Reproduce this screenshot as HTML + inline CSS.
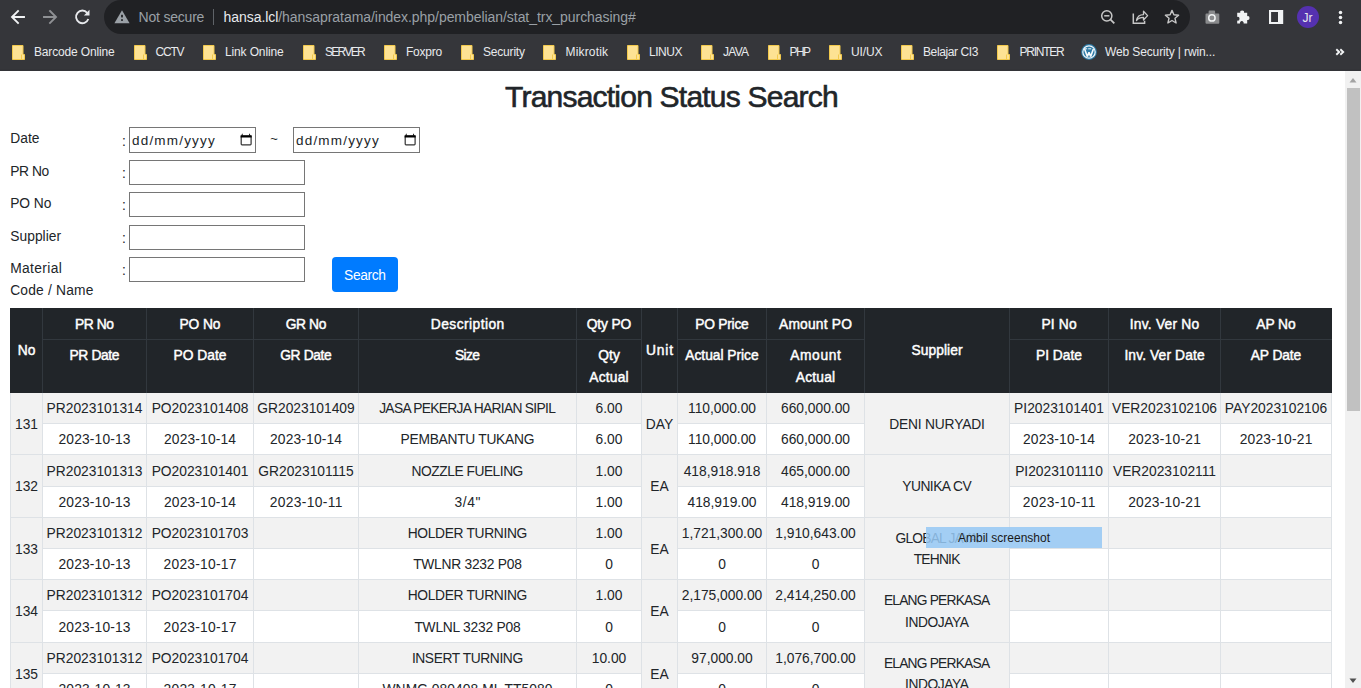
<!DOCTYPE html>
<html><head><meta charset="utf-8"><title>Transaction Status Search</title>
<style>
html,body{margin:0;padding:0;width:1361px;height:688px;overflow:hidden;background:#fff;}
body{position:relative;font-family:"Liberation Sans", sans-serif;}
.r{position:absolute;box-sizing:content-box;}
.t{position:absolute;white-space:nowrap;font-family:"Liberation Sans", sans-serif;}
</style></head><body>
<div class="r" style="left:0px;top:0px;width:1361px;height:71px;background:#35363a;"></div>
<div class="r" style="left:0px;top:69px;width:1361px;height:2px;background:#333438;"></div>
<div class="r" style="left:104px;top:0px;width:1086px;height:34px;background:#202124;border-radius:0 17px 17px 17px;border-top-left-radius:17px;"></div>
<svg class="r" style="left:0;top:0" width="100" height="34" viewBox="0 0 100 34">
<g fill="none" stroke-width="1.9" stroke-linecap="square">
<path d="M24 17 H12.5 M18 11 L12 17 L18 23" stroke="#f1f3f4"/>
<path d="M44 17 H55.5 M50 11 L56 17 L50 23" stroke="#8f9194"/>
</g>
<path d="M87.2 12.8 A6.3 6.3 0 1 0 88.3 19" fill="none" stroke="#e8eaed" stroke-width="1.9"/>
<path d="M89.5 9.8 V15.4 H83.9 Z" fill="#e8eaed"/>
</svg>
<svg class="r" style="left:113px;top:9px" width="18" height="16" viewBox="0 0 18 16">
<path d="M9 1.2 L16.6 14.3 H1.4 Z" fill="#9aa0a6"/>
<rect x="8.1" y="5.8" width="1.8" height="2.6" fill="#202124"/>
<rect x="8.1" y="10.2" width="1.8" height="1.7" fill="#202124"/>
</svg>
<div class="t" style="top:8px;height:18px;line-height:18px;font-size:14px;color:#9aa0a6;letter-spacing:-0.2px;left:138.50px;">Not secure</div>
<div class="r" style="left:213px;top:9px;width:1px;height:16px;background:#5f6368;"></div>
<div class="t" style="top:8px;height:18px;line-height:18px;font-size:14px;color:#9aa0a6;letter-spacing:-0.053px;left:223.50px;"><span style="color:#e8eaed">hansa.lcl</span><span style="color:#9aa0a6">/hansapratama/index.php/pembelian/stat_trx_purchasing#</span></div>
<svg class="r" style="left:0;top:0" width="1361" height="34" viewBox="0 0 1361 34">
<g fill="none" stroke="#c7c7c7" stroke-width="1.5">
<circle cx="1106.8" cy="15.8" r="5.1"/>
<path d="M1110.6 19.6 L1114.3 23.3" stroke-width="1.8"/>
<path d="M1104.2 15.8 H1109.4"/>
<path d="M1133.3 13.5 V23.3 H1144.6 V20.8"/>
<path d="M1136.5 20.5 C1137.3 16.5 1140 14.6 1143.5 14.6 V11.2 L1147.6 15.6 L1143.5 20 V17.4 C1140.5 17.4 1138.3 18.3 1136.5 20.5 Z" stroke-linejoin="round" stroke-width="1.3"/>
<path d="M1172 10.4 L1173.9 14.8 L1178.6 15.2 L1175 18.3 L1176.1 23 L1172 20.5 L1167.9 23 L1169 18.3 L1165.4 15.2 L1170.1 14.8 Z" stroke-linejoin="round" stroke-width="1.4"/>
</g>
<path d="M1205.5 14.6 Q1205.5 13.6 1206.5 13.6 H1208.6 V11.5 Q1208.6 10.6 1209.6 10.6 H1214.2 Q1215.1 10.6 1215.1 11.5 V13.6 H1218.3 Q1219.3 13.6 1219.3 14.6 V22.8 Q1219.3 23.8 1218.3 23.8 H1206.5 Q1205.5 23.8 1205.5 22.8 Z" fill="#8a8b8d"/>
<circle cx="1211.9" cy="17.9" r="3.2" fill="none" stroke="#f1f3f4" stroke-width="1.5"/>
<path d="M1237.2 12.8 H1240.3 A1.9 1.9 0 1 1 1244 12.8 H1247.2 V16.2 A1.9 1.9 0 1 1 1247.2 19.9 V23.6 H1243.6 A1.9 1.9 0 1 0 1240 23.6 H1237.2 V20.6 A1.9 1.9 0 1 0 1237.2 16.9 Z" fill="#f1f3f4"/>
<path d="M1269 9.9 H1283.2 V24 H1269 Z M1271.1 12 V21.9 H1278 V12 Z" fill="#f1f3f4" fill-rule="evenodd"/>
</svg>
<div class="r" style="left:1297px;top:6px;width:22px;height:22px;border-radius:50%;background:#5531b0"></div>
<div class="t" style="top:10px;height:16px;line-height:16px;font-size:12px;color:#e8eaed;left:1292.50px;width:30px;text-align:center;">Jr</div>
<svg class="r" style="left:1330px;top:0" width="20" height="34"><circle cx="10.5" cy="12.5" r="1.75" fill="#f1f3f4"/><circle cx="10.5" cy="17.6" r="1.75" fill="#f1f3f4"/><circle cx="10.5" cy="22.6" r="1.75" fill="#f1f3f4"/></svg>
<svg class="r" style="left:12px;top:45px" width="13" height="15" viewBox="0 0 13 15"><path d="M0.5 0.5 H11 V9.5 H12.5 V14.5 H0.5 Z" fill="#fde293" stroke="#f2c94c" stroke-width="1"/><path d="M9.5 9.5 V14.5" stroke="#f2c94c" stroke-width="1"/></svg>
<div class="t" style="top:44px;height:16px;line-height:16px;font-size:12px;color:#e8eaed;letter-spacing:-0.157px;left:34.00px;">Barcode Online</div>
<svg class="r" style="left:134px;top:45px" width="13" height="15" viewBox="0 0 13 15"><path d="M0.5 0.5 H11 V9.5 H12.5 V14.5 H0.5 Z" fill="#fde293" stroke="#f2c94c" stroke-width="1"/><path d="M9.5 9.5 V14.5" stroke="#f2c94c" stroke-width="1"/></svg>
<div class="t" style="top:44px;height:16px;line-height:16px;font-size:12px;color:#e8eaed;letter-spacing:-1.221px;left:155.50px;">CCTV</div>
<svg class="r" style="left:203px;top:45px" width="13" height="15" viewBox="0 0 13 15"><path d="M0.5 0.5 H11 V9.5 H12.5 V14.5 H0.5 Z" fill="#fde293" stroke="#f2c94c" stroke-width="1"/><path d="M9.5 9.5 V14.5" stroke="#f2c94c" stroke-width="1"/></svg>
<div class="t" style="top:44px;height:16px;line-height:16px;font-size:12px;color:#e8eaed;letter-spacing:-0.136px;left:225.00px;">Link Online</div>
<svg class="r" style="left:303px;top:45px" width="13" height="15" viewBox="0 0 13 15"><path d="M0.5 0.5 H11 V9.5 H12.5 V14.5 H0.5 Z" fill="#fde293" stroke="#f2c94c" stroke-width="1"/><path d="M9.5 9.5 V14.5" stroke="#f2c94c" stroke-width="1"/></svg>
<div class="t" style="top:44px;height:16px;line-height:16px;font-size:12px;color:#e8eaed;letter-spacing:-1.693px;left:325.00px;">SERVER</div>
<svg class="r" style="left:384px;top:45px" width="13" height="15" viewBox="0 0 13 15"><path d="M0.5 0.5 H11 V9.5 H12.5 V14.5 H0.5 Z" fill="#fde293" stroke="#f2c94c" stroke-width="1"/><path d="M9.5 9.5 V14.5" stroke="#f2c94c" stroke-width="1"/></svg>
<div class="t" style="top:44px;height:16px;line-height:16px;font-size:12px;color:#e8eaed;letter-spacing:-0.235px;left:406.00px;">Foxpro</div>
<svg class="r" style="left:461px;top:45px" width="13" height="15" viewBox="0 0 13 15"><path d="M0.5 0.5 H11 V9.5 H12.5 V14.5 H0.5 Z" fill="#fde293" stroke="#f2c94c" stroke-width="1"/><path d="M9.5 9.5 V14.5" stroke="#f2c94c" stroke-width="1"/></svg>
<div class="t" style="top:44px;height:16px;line-height:16px;font-size:12px;color:#e8eaed;letter-spacing:-0.193px;left:483.00px;">Security</div>
<svg class="r" style="left:543px;top:45px" width="13" height="15" viewBox="0 0 13 15"><path d="M0.5 0.5 H11 V9.5 H12.5 V14.5 H0.5 Z" fill="#fde293" stroke="#f2c94c" stroke-width="1"/><path d="M9.5 9.5 V14.5" stroke="#f2c94c" stroke-width="1"/></svg>
<div class="t" style="top:44px;height:16px;line-height:16px;font-size:12px;color:#e8eaed;letter-spacing:0.167px;left:565.50px;">Mikrotik</div>
<svg class="r" style="left:627px;top:45px" width="13" height="15" viewBox="0 0 13 15"><path d="M0.5 0.5 H11 V9.5 H12.5 V14.5 H0.5 Z" fill="#fde293" stroke="#f2c94c" stroke-width="1"/><path d="M9.5 9.5 V14.5" stroke="#f2c94c" stroke-width="1"/></svg>
<div class="t" style="top:44px;height:16px;line-height:16px;font-size:12px;color:#e8eaed;letter-spacing:-0.46px;left:649.00px;">LINUX</div>
<svg class="r" style="left:701px;top:45px" width="13" height="15" viewBox="0 0 13 15"><path d="M0.5 0.5 H11 V9.5 H12.5 V14.5 H0.5 Z" fill="#fde293" stroke="#f2c94c" stroke-width="1"/><path d="M9.5 9.5 V14.5" stroke="#f2c94c" stroke-width="1"/></svg>
<div class="t" style="top:44px;height:16px;line-height:16px;font-size:12px;color:#e8eaed;letter-spacing:-0.742px;left:723.00px;">JAVA</div>
<svg class="r" style="left:768px;top:45px" width="13" height="15" viewBox="0 0 13 15"><path d="M0.5 0.5 H11 V9.5 H12.5 V14.5 H0.5 Z" fill="#fde293" stroke="#f2c94c" stroke-width="1"/><path d="M9.5 9.5 V14.5" stroke="#f2c94c" stroke-width="1"/></svg>
<div class="t" style="top:44px;height:16px;line-height:16px;font-size:12px;color:#e8eaed;letter-spacing:-1.585px;left:789.50px;">PHP</div>
<svg class="r" style="left:829px;top:45px" width="13" height="15" viewBox="0 0 13 15"><path d="M0.5 0.5 H11 V9.5 H12.5 V14.5 H0.5 Z" fill="#fde293" stroke="#f2c94c" stroke-width="1"/><path d="M9.5 9.5 V14.5" stroke="#f2c94c" stroke-width="1"/></svg>
<div class="t" style="top:44px;height:16px;line-height:16px;font-size:12px;color:#e8eaed;letter-spacing:-0.125px;left:851.00px;">UI/UX</div>
<svg class="r" style="left:901px;top:45px" width="13" height="15" viewBox="0 0 13 15"><path d="M0.5 0.5 H11 V9.5 H12.5 V14.5 H0.5 Z" fill="#fde293" stroke="#f2c94c" stroke-width="1"/><path d="M9.5 9.5 V14.5" stroke="#f2c94c" stroke-width="1"/></svg>
<div class="t" style="top:44px;height:16px;line-height:16px;font-size:12px;color:#e8eaed;letter-spacing:-0.399px;left:923.00px;">Belajar CI3</div>
<svg class="r" style="left:997px;top:45px" width="13" height="15" viewBox="0 0 13 15"><path d="M0.5 0.5 H11 V9.5 H12.5 V14.5 H0.5 Z" fill="#fde293" stroke="#f2c94c" stroke-width="1"/><path d="M9.5 9.5 V14.5" stroke="#f2c94c" stroke-width="1"/></svg>
<div class="t" style="top:44px;height:16px;line-height:16px;font-size:12px;color:#e8eaed;letter-spacing:-1.251px;left:1019.50px;">PRINTER</div>
<svg class="r" style="left:1081px;top:44px" width="16" height="16" viewBox="0 0 16 16"><circle cx="8" cy="8" r="7.9" fill="#2d7aa6"/><circle cx="8" cy="8" r="6.2" fill="none" stroke="#f4f8fb" stroke-width="1.2"/><path d="M3.6 5 L6.4 12.6 L8 8.2 L9.6 12.6 L12.4 5" fill="none" stroke="#f4f8fb" stroke-width="1.6" stroke-linejoin="bevel"/><path d="M3 4.8 H6.2 M7.2 4.8 H10.2" stroke="#f4f8fb" stroke-width="1"/></svg>
<div class="t" style="top:44px;height:16px;line-height:16px;font-size:12px;color:#e8eaed;letter-spacing:-0.124px;left:1105.00px;">Web Security | rwin...</div>
<svg class="r" style="left:1330px;top:44px" width="20" height="16"><path d="M6.3 5.2 L9.2 8 L6.3 10.8 M10.3 5.2 L13.2 8 L10.3 10.8" fill="none" stroke="#f1f3f4" stroke-width="1.9"/></svg>
<div class="r" style="left:0px;top:71px;width:1345px;height:617px;background:#ffffff;"></div>
<div class="r" style="left:1345px;top:71px;width:16px;height:617px;background:#f1f1f1;"></div>
<div class="r" style="left:1347px;top:88px;width:13px;height:323px;background:#c1c1c1;"></div>
<svg class="r" style="left:1345px;top:71px" width="16" height="617" viewBox="0 0 16 617"><path d="M4.5 11.5 L8 7 L11.5 11.5 Z" fill="#a3a3a3"/><path d="M4.5 607.5 L8 612 L11.5 607.5 Z" fill="#505050"/></svg>
<div class="t" style="top:77px;height:39px;line-height:39px;font-size:30px;color:#212529;letter-spacing:-0.78px;left:505.00px;-webkit-text-stroke:0.6px #212529;">Transaction Status Search</div>
<div class="t" style="top:130px;height:18px;line-height:18px;font-size:13.8px;color:#212529;letter-spacing:0.043px;left:10.20px;">Date</div>
<div class="t" style="top:163px;height:18px;line-height:18px;font-size:13.8px;color:#212529;letter-spacing:-0.391px;left:10.20px;">PR No</div>
<div class="t" style="top:195px;height:18px;line-height:18px;font-size:13.8px;color:#212529;letter-spacing:-0.033px;left:10.20px;">PO No</div>
<div class="t" style="top:228px;height:18px;line-height:18px;font-size:13.8px;color:#212529;letter-spacing:0.053px;left:10.20px;">Supplier</div>
<div class="t" style="top:260px;height:18px;line-height:18px;font-size:13.8px;color:#212529;letter-spacing:0.371px;left:10.20px;">Material</div>
<div class="t" style="top:282px;height:18px;line-height:18px;font-size:13.8px;color:#212529;letter-spacing:0.189px;left:10.20px;">Code / Name</div>
<div class="t" style="top:133px;height:18px;line-height:18px;font-size:13.8px;color:#212529;left:122.00px;">:</div>
<div class="t" style="top:165px;height:18px;line-height:18px;font-size:13.8px;color:#212529;left:122.00px;">:</div>
<div class="t" style="top:197px;height:18px;line-height:18px;font-size:13.8px;color:#212529;left:122.00px;">:</div>
<div class="t" style="top:230px;height:18px;line-height:18px;font-size:13.8px;color:#212529;left:122.00px;">:</div>
<div class="t" style="top:262px;height:18px;line-height:18px;font-size:13.8px;color:#212529;left:122.00px;">:</div>
<div class="r" style="left:129px;top:127px;width:125px;height:24px;border:1px solid #767676;background:#fff"></div>
<div class="t" style="top:132px;height:18px;line-height:18px;font-size:13.5px;color:#212529;letter-spacing:1.193px;left:132.00px;">dd/mm/yyyy</div>
<svg class="r" style="left:239px;top:132px" width="14" height="15" viewBox="0 0 14 15"><rect x="2.2" y="4" width="9.9" height="8.8" rx="0.8" fill="none" stroke="#333" stroke-width="1.2"/><rect x="1.6" y="3.3" width="11.1" height="2.2" fill="#000"/><path d="M3.2 1.2 L4 3.5 H2.4 Z M10.6 1.2 L11.4 3.5 H9.8 Z" fill="#000"/></svg>
<div class="r" style="left:293px;top:127px;width:125px;height:24px;border:1px solid #767676;background:#fff"></div>
<div class="t" style="top:132px;height:18px;line-height:18px;font-size:13.5px;color:#212529;letter-spacing:1.193px;left:296.00px;">dd/mm/yyyy</div>
<svg class="r" style="left:403px;top:132px" width="14" height="15" viewBox="0 0 14 15"><rect x="2.2" y="4" width="9.9" height="8.8" rx="0.8" fill="none" stroke="#333" stroke-width="1.2"/><rect x="1.6" y="3.3" width="11.1" height="2.2" fill="#000"/><path d="M3.2 1.2 L4 3.5 H2.4 Z M10.6 1.2 L11.4 3.5 H9.8 Z" fill="#000"/></svg>
<div class="t" style="top:130px;height:17px;line-height:17px;font-size:13px;color:#212529;left:264.00px;width:20px;text-align:center;">~</div>
<div class="r" style="left:129px;top:160px;width:174px;height:23px;border:1px solid #767676;background:#fff"></div>
<div class="r" style="left:129px;top:192px;width:174px;height:23px;border:1px solid #767676;background:#fff"></div>
<div class="r" style="left:129px;top:225px;width:174px;height:23px;border:1px solid #767676;background:#fff"></div>
<div class="r" style="left:129px;top:257px;width:174px;height:23px;border:1px solid #767676;background:#fff"></div>
<div class="r" style="left:332px;top:257px;width:66px;height:35px;border-radius:4px;background:#007bff"></div>
<div class="t" style="top:267px;height:18px;line-height:18px;font-size:13.8px;color:#ffffff;letter-spacing:-0.368px;left:331.82px;width:66px;text-align:center;">Search</div>
<div class="r" style="left:10px;top:308px;width:1322px;height:85px;background:#212529;"></div>
<div class="r" style="left:42px;top:308px;width:1px;height:85px;background:#32383e;"></div>
<div class="r" style="left:146px;top:308px;width:1px;height:85px;background:#32383e;"></div>
<div class="r" style="left:253px;top:308px;width:1px;height:85px;background:#32383e;"></div>
<div class="r" style="left:358px;top:308px;width:1px;height:85px;background:#32383e;"></div>
<div class="r" style="left:576px;top:308px;width:1px;height:85px;background:#32383e;"></div>
<div class="r" style="left:641px;top:308px;width:1px;height:85px;background:#32383e;"></div>
<div class="r" style="left:677px;top:308px;width:1px;height:85px;background:#32383e;"></div>
<div class="r" style="left:766px;top:308px;width:1px;height:85px;background:#32383e;"></div>
<div class="r" style="left:864px;top:308px;width:1px;height:85px;background:#32383e;"></div>
<div class="r" style="left:1009px;top:308px;width:1px;height:85px;background:#32383e;"></div>
<div class="r" style="left:1108px;top:308px;width:1px;height:85px;background:#32383e;"></div>
<div class="r" style="left:1220px;top:308px;width:1px;height:85px;background:#32383e;"></div>
<div class="r" style="left:42px;top:339px;width:105px;height:1px;background:#32383e;"></div>
<div class="r" style="left:146px;top:339px;width:108px;height:1px;background:#32383e;"></div>
<div class="r" style="left:253px;top:339px;width:106px;height:1px;background:#32383e;"></div>
<div class="r" style="left:358px;top:339px;width:219px;height:1px;background:#32383e;"></div>
<div class="r" style="left:576px;top:339px;width:66px;height:1px;background:#32383e;"></div>
<div class="r" style="left:677px;top:339px;width:90px;height:1px;background:#32383e;"></div>
<div class="r" style="left:766px;top:339px;width:99px;height:1px;background:#32383e;"></div>
<div class="r" style="left:1009px;top:339px;width:100px;height:1px;background:#32383e;"></div>
<div class="r" style="left:1108px;top:339px;width:113px;height:1px;background:#32383e;"></div>
<div class="r" style="left:1220px;top:339px;width:112px;height:1px;background:#32383e;"></div>
<div class="t" style="top:342px;height:18px;line-height:18px;font-size:13.8px;color:#fff;left:-9.50px;width:72px;text-align:center;-webkit-text-stroke:0.45px #fff;">No</div>
<div class="t" style="top:316px;height:18px;line-height:18px;font-size:13.8px;color:#fff;letter-spacing:-0.416px;left:22.29px;width:144px;text-align:center;-webkit-text-stroke:0.45px #fff;">PR No</div>
<div class="t" style="top:347px;height:18px;line-height:18px;font-size:13.8px;color:#fff;letter-spacing:-0.345px;left:22.33px;width:144px;text-align:center;-webkit-text-stroke:0.45px #fff;">PR Date</div>
<div class="t" style="top:316px;height:18px;line-height:18px;font-size:13.8px;color:#fff;letter-spacing:-0.083px;left:126.46px;width:147px;text-align:center;-webkit-text-stroke:0.45px #fff;">PO No</div>
<div class="t" style="top:347px;height:18px;line-height:18px;font-size:13.8px;color:#fff;letter-spacing:-0.006px;left:126.50px;width:147px;text-align:center;-webkit-text-stroke:0.45px #fff;">PO Date</div>
<div class="t" style="top:316px;height:18px;line-height:18px;font-size:13.8px;color:#fff;letter-spacing:-0.373px;left:233.31px;width:145px;text-align:center;-webkit-text-stroke:0.45px #fff;">GR No</div>
<div class="t" style="top:347px;height:18px;line-height:18px;font-size:13.8px;color:#fff;letter-spacing:-0.366px;left:233.32px;width:145px;text-align:center;-webkit-text-stroke:0.45px #fff;">GR Date</div>
<div class="t" style="top:316px;height:18px;line-height:18px;font-size:13.8px;color:#fff;letter-spacing:0.436px;left:338.72px;width:258px;text-align:center;-webkit-text-stroke:0.45px #fff;">Description</div>
<div class="t" style="top:347px;height:18px;line-height:18px;font-size:13.8px;color:#fff;letter-spacing:-0.689px;left:338.16px;width:258px;text-align:center;-webkit-text-stroke:0.45px #fff;">Size</div>
<div class="t" style="top:316px;height:18px;line-height:18px;font-size:13.8px;color:#fff;letter-spacing:-0.12px;left:556.44px;width:105px;text-align:center;-webkit-text-stroke:0.45px #fff;">Qty PO</div>
<div class="t" style="top:347px;height:18px;line-height:18px;font-size:13.8px;color:#fff;letter-spacing:0.118px;left:556.56px;width:105px;text-align:center;-webkit-text-stroke:0.45px #fff;">Qty</div>
<div class="t" style="top:369px;height:18px;line-height:18px;font-size:13.8px;color:#fff;letter-spacing:0.184px;left:556.59px;width:105px;text-align:center;-webkit-text-stroke:0.45px #fff;">Actual</div>
<div class="t" style="top:342px;height:18px;line-height:18px;font-size:13.8px;color:#fff;letter-spacing:0.866px;left:621.93px;width:76px;text-align:center;-webkit-text-stroke:0.45px #fff;">Unit</div>
<div class="t" style="top:316px;height:18px;line-height:18px;font-size:13.8px;color:#fff;letter-spacing:-0.247px;left:657.38px;width:129px;text-align:center;-webkit-text-stroke:0.45px #fff;">PO Price</div>
<div class="t" style="top:347px;height:18px;line-height:18px;font-size:13.8px;color:#fff;letter-spacing:-0.022px;left:657.49px;width:129px;text-align:center;-webkit-text-stroke:0.45px #fff;">Actual Price</div>
<div class="t" style="top:316px;height:18px;line-height:18px;font-size:13.8px;color:#fff;letter-spacing:0.202px;left:746.60px;width:138px;text-align:center;-webkit-text-stroke:0.45px #fff;">Amount PO</div>
<div class="t" style="top:347px;height:18px;line-height:18px;font-size:13.8px;color:#fff;letter-spacing:0.617px;left:746.81px;width:138px;text-align:center;-webkit-text-stroke:0.45px #fff;">Amount</div>
<div class="t" style="top:369px;height:18px;line-height:18px;font-size:13.8px;color:#fff;letter-spacing:0.184px;left:746.59px;width:138px;text-align:center;-webkit-text-stroke:0.45px #fff;">Actual</div>
<div class="t" style="top:342px;height:18px;line-height:18px;font-size:13.8px;color:#fff;letter-spacing:0.068px;left:844.53px;width:185px;text-align:center;-webkit-text-stroke:0.45px #fff;">Supplier</div>
<div class="t" style="top:316px;height:18px;line-height:18px;font-size:13.8px;color:#fff;letter-spacing:0.167px;left:989.58px;width:139px;text-align:center;-webkit-text-stroke:0.45px #fff;">PI No</div>
<div class="t" style="top:347px;height:18px;line-height:18px;font-size:13.8px;color:#fff;letter-spacing:-0.006px;left:989.50px;width:139px;text-align:center;-webkit-text-stroke:0.45px #fff;">PI Date</div>
<div class="t" style="top:316px;height:18px;line-height:18px;font-size:13.8px;color:#fff;letter-spacing:0.215px;left:1088.61px;width:152px;text-align:center;-webkit-text-stroke:0.45px #fff;">Inv. Ver No</div>
<div class="t" style="top:347px;height:18px;line-height:18px;font-size:13.8px;color:#fff;letter-spacing:0.12px;left:1088.56px;width:152px;text-align:center;-webkit-text-stroke:0.45px #fff;">Inv. Ver Date</div>
<div class="t" style="top:316px;height:18px;line-height:18px;font-size:13.8px;color:#fff;letter-spacing:-0.1px;left:1200.45px;width:151px;text-align:center;-webkit-text-stroke:0.45px #fff;">AP No</div>
<div class="t" style="top:347px;height:18px;line-height:18px;font-size:13.8px;color:#fff;letter-spacing:-0.118px;left:1200.44px;width:151px;text-align:center;-webkit-text-stroke:0.45px #fff;">AP Date</div>
<div class="r" style="left:10px;top:393px;width:1322px;height:31px;background:#f2f2f2;"></div>
<div class="r" style="left:10px;top:423px;width:32px;height:31px;background:#f2f2f2;"></div>
<div class="r" style="left:641px;top:423px;width:36px;height:31px;background:#f2f2f2;"></div>
<div class="r" style="left:864px;top:423px;width:145px;height:31px;background:#f2f2f2;"></div>
<div class="t" style="top:416px;height:18px;line-height:18px;font-size:13.8px;color:#212529;left:-9.50px;width:72px;text-align:center;">131</div>
<div class="t" style="top:400px;height:18px;line-height:18px;font-size:13.8px;color:#212529;left:22.50px;width:144px;text-align:center;">PR2023101314</div>
<div class="t" style="top:431px;height:18px;line-height:18px;font-size:13.8px;color:#212529;letter-spacing:0.155px;left:22.58px;width:144px;text-align:center;">2023-10-13</div>
<div class="t" style="top:400px;height:18px;line-height:18px;font-size:13.8px;color:#212529;left:126.50px;width:147px;text-align:center;">PO2023101408</div>
<div class="t" style="top:431px;height:18px;line-height:18px;font-size:13.8px;color:#212529;letter-spacing:0.155px;left:126.58px;width:147px;text-align:center;">2023-10-14</div>
<div class="t" style="top:400px;height:18px;line-height:18px;font-size:13.8px;color:#212529;left:233.50px;width:145px;text-align:center;">GR2023101409</div>
<div class="t" style="top:431px;height:18px;line-height:18px;font-size:13.8px;color:#212529;letter-spacing:0.155px;left:233.58px;width:145px;text-align:center;">2023-10-14</div>
<div class="t" style="top:400px;height:18px;line-height:18px;font-size:13.8px;color:#212529;letter-spacing:-0.691px;left:338.15px;width:258px;text-align:center;">JASA PEKERJA HARIAN SIPIL</div>
<div class="t" style="top:431px;height:18px;line-height:18px;font-size:13.8px;color:#212529;letter-spacing:-0.282px;left:338.36px;width:258px;text-align:center;">PEMBANTU TUKANG</div>
<div class="t" style="top:400px;height:18px;line-height:18px;font-size:13.8px;color:#212529;left:556.50px;width:105px;text-align:center;">6.00</div>
<div class="t" style="top:431px;height:18px;line-height:18px;font-size:13.8px;color:#212529;left:556.50px;width:105px;text-align:center;">6.00</div>
<div class="t" style="top:416px;height:18px;line-height:18px;font-size:13.8px;color:#212529;left:621.50px;width:76px;text-align:center;">DAY</div>
<div class="t" style="top:400px;height:18px;line-height:18px;font-size:13.8px;color:#212529;left:657.50px;width:129px;text-align:center;">110,000.00</div>
<div class="t" style="top:431px;height:18px;line-height:18px;font-size:13.8px;color:#212529;left:657.50px;width:129px;text-align:center;">110,000.00</div>
<div class="t" style="top:400px;height:18px;line-height:18px;font-size:13.8px;color:#212529;left:746.50px;width:138px;text-align:center;">660,000.00</div>
<div class="t" style="top:431px;height:18px;line-height:18px;font-size:13.8px;color:#212529;left:746.50px;width:138px;text-align:center;">660,000.00</div>
<div class="t" style="top:416px;height:18px;line-height:18px;font-size:13.8px;color:#212529;letter-spacing:-0.189px;left:844.41px;width:185px;text-align:center;">DENI NURYADI</div>
<div class="t" style="top:400px;height:18px;line-height:18px;font-size:13.8px;color:#212529;left:989.50px;width:139px;text-align:center;">PI2023101401</div>
<div class="t" style="top:431px;height:18px;line-height:18px;font-size:13.8px;color:#212529;letter-spacing:0.155px;left:989.58px;width:139px;text-align:center;">2023-10-14</div>
<div class="t" style="top:400px;height:18px;line-height:18px;font-size:13.8px;color:#212529;left:1088.50px;width:152px;text-align:center;">VER2023102106</div>
<div class="t" style="top:431px;height:18px;line-height:18px;font-size:13.8px;color:#212529;letter-spacing:0.233px;left:1088.62px;width:152px;text-align:center;">2023-10-21</div>
<div class="t" style="top:400px;height:18px;line-height:18px;font-size:13.8px;color:#212529;left:1200.50px;width:151px;text-align:center;">PAY2023102106</div>
<div class="t" style="top:431px;height:18px;line-height:18px;font-size:13.8px;color:#212529;letter-spacing:0.233px;left:1200.62px;width:151px;text-align:center;">2023-10-21</div>
<div class="r" style="left:10px;top:455px;width:1322px;height:32px;background:#f2f2f2;"></div>
<div class="r" style="left:10px;top:486px;width:32px;height:31px;background:#f2f2f2;"></div>
<div class="r" style="left:641px;top:486px;width:36px;height:31px;background:#f2f2f2;"></div>
<div class="r" style="left:864px;top:486px;width:145px;height:31px;background:#f2f2f2;"></div>
<div class="t" style="top:478px;height:18px;line-height:18px;font-size:13.8px;color:#212529;left:-9.50px;width:72px;text-align:center;">132</div>
<div class="t" style="top:463px;height:18px;line-height:18px;font-size:13.8px;color:#212529;left:22.50px;width:144px;text-align:center;">PR2023101313</div>
<div class="t" style="top:494px;height:18px;line-height:18px;font-size:13.8px;color:#212529;letter-spacing:0.155px;left:22.58px;width:144px;text-align:center;">2023-10-13</div>
<div class="t" style="top:463px;height:18px;line-height:18px;font-size:13.8px;color:#212529;left:126.50px;width:147px;text-align:center;">PO2023101401</div>
<div class="t" style="top:494px;height:18px;line-height:18px;font-size:13.8px;color:#212529;letter-spacing:0.155px;left:126.58px;width:147px;text-align:center;">2023-10-14</div>
<div class="t" style="top:463px;height:18px;line-height:18px;font-size:13.8px;color:#212529;left:233.50px;width:145px;text-align:center;">GR2023101115</div>
<div class="t" style="top:494px;height:18px;line-height:18px;font-size:13.8px;color:#212529;letter-spacing:0.347px;left:233.67px;width:145px;text-align:center;">2023-10-11</div>
<div class="t" style="top:463px;height:18px;line-height:18px;font-size:13.8px;color:#212529;letter-spacing:-0.486px;left:338.26px;width:258px;text-align:center;">NOZZLE FUELING</div>
<div class="t" style="top:494px;height:18px;line-height:18px;font-size:13.8px;color:#212529;letter-spacing:0.607px;left:338.80px;width:258px;text-align:center;">3/4&quot;</div>
<div class="t" style="top:463px;height:18px;line-height:18px;font-size:13.8px;color:#212529;left:556.50px;width:105px;text-align:center;">1.00</div>
<div class="t" style="top:494px;height:18px;line-height:18px;font-size:13.8px;color:#212529;left:556.50px;width:105px;text-align:center;">1.00</div>
<div class="t" style="top:478px;height:18px;line-height:18px;font-size:13.8px;color:#212529;left:621.50px;width:76px;text-align:center;">EA</div>
<div class="t" style="top:463px;height:18px;line-height:18px;font-size:13.8px;color:#212529;left:657.50px;width:129px;text-align:center;">418,918.918</div>
<div class="t" style="top:494px;height:18px;line-height:18px;font-size:13.8px;color:#212529;left:657.50px;width:129px;text-align:center;">418,919.00</div>
<div class="t" style="top:463px;height:18px;line-height:18px;font-size:13.8px;color:#212529;left:746.50px;width:138px;text-align:center;">465,000.00</div>
<div class="t" style="top:494px;height:18px;line-height:18px;font-size:13.8px;color:#212529;left:746.50px;width:138px;text-align:center;">418,919.00</div>
<div class="t" style="top:478px;height:18px;line-height:18px;font-size:13.8px;color:#212529;letter-spacing:-0.546px;left:844.23px;width:185px;text-align:center;">YUNIKA CV</div>
<div class="t" style="top:463px;height:18px;line-height:18px;font-size:13.8px;color:#212529;left:989.50px;width:139px;text-align:center;">PI2023101110</div>
<div class="t" style="top:494px;height:18px;line-height:18px;font-size:13.8px;color:#212529;letter-spacing:0.347px;left:989.67px;width:139px;text-align:center;">2023-10-11</div>
<div class="t" style="top:463px;height:18px;line-height:18px;font-size:13.8px;color:#212529;left:1088.50px;width:152px;text-align:center;">VER2023102111</div>
<div class="t" style="top:494px;height:18px;line-height:18px;font-size:13.8px;color:#212529;letter-spacing:0.233px;left:1088.62px;width:152px;text-align:center;">2023-10-21</div>
<div class="r" style="left:10px;top:518px;width:1322px;height:31px;background:#f2f2f2;"></div>
<div class="r" style="left:10px;top:548px;width:32px;height:31px;background:#f2f2f2;"></div>
<div class="r" style="left:641px;top:548px;width:36px;height:31px;background:#f2f2f2;"></div>
<div class="r" style="left:864px;top:548px;width:145px;height:31px;background:#f2f2f2;"></div>
<div class="t" style="top:541px;height:18px;line-height:18px;font-size:13.8px;color:#212529;left:-9.50px;width:72px;text-align:center;">133</div>
<div class="t" style="top:525px;height:18px;line-height:18px;font-size:13.8px;color:#212529;left:22.50px;width:144px;text-align:center;">PR2023101312</div>
<div class="t" style="top:556px;height:18px;line-height:18px;font-size:13.8px;color:#212529;letter-spacing:0.155px;left:22.58px;width:144px;text-align:center;">2023-10-13</div>
<div class="t" style="top:525px;height:18px;line-height:18px;font-size:13.8px;color:#212529;left:126.50px;width:147px;text-align:center;">PO2023101703</div>
<div class="t" style="top:556px;height:18px;line-height:18px;font-size:13.8px;color:#212529;letter-spacing:0.267px;left:126.63px;width:147px;text-align:center;">2023-10-17</div>
<div class="t" style="top:525px;height:18px;line-height:18px;font-size:13.8px;color:#212529;letter-spacing:-0.342px;left:338.33px;width:258px;text-align:center;">HOLDER TURNING</div>
<div class="t" style="top:556px;height:18px;line-height:18px;font-size:13.8px;color:#212529;letter-spacing:-0.253px;left:338.37px;width:258px;text-align:center;">TWLNR 3232 P08</div>
<div class="t" style="top:525px;height:18px;line-height:18px;font-size:13.8px;color:#212529;left:556.50px;width:105px;text-align:center;">1.00</div>
<div class="t" style="top:556px;height:18px;line-height:18px;font-size:13.8px;color:#212529;left:556.50px;width:105px;text-align:center;">0</div>
<div class="t" style="top:541px;height:18px;line-height:18px;font-size:13.8px;color:#212529;left:621.50px;width:76px;text-align:center;">EA</div>
<div class="t" style="top:525px;height:18px;line-height:18px;font-size:13.8px;color:#212529;left:657.50px;width:129px;text-align:center;">1,721,300.00</div>
<div class="t" style="top:556px;height:18px;line-height:18px;font-size:13.8px;color:#212529;left:657.50px;width:129px;text-align:center;">0</div>
<div class="t" style="top:525px;height:18px;line-height:18px;font-size:13.8px;color:#212529;left:746.50px;width:138px;text-align:center;">1,910,643.00</div>
<div class="t" style="top:556px;height:18px;line-height:18px;font-size:13.8px;color:#212529;left:746.50px;width:138px;text-align:center;">0</div>
<div class="t" style="top:530px;height:18px;line-height:18px;font-size:13.8px;color:#212529;letter-spacing:-0.81px;left:844.10px;width:185px;text-align:center;">GLOBAL JAYA</div>
<div class="t" style="top:551px;height:18px;line-height:18px;font-size:13.8px;color:#212529;letter-spacing:-0.778px;left:844.11px;width:185px;text-align:center;">TEHNIK</div>
<div class="r" style="left:10px;top:580px;width:1322px;height:31px;background:#f2f2f2;"></div>
<div class="r" style="left:10px;top:610px;width:32px;height:32px;background:#f2f2f2;"></div>
<div class="r" style="left:641px;top:610px;width:36px;height:32px;background:#f2f2f2;"></div>
<div class="r" style="left:864px;top:610px;width:145px;height:32px;background:#f2f2f2;"></div>
<div class="t" style="top:603px;height:18px;line-height:18px;font-size:13.8px;color:#212529;left:-9.50px;width:72px;text-align:center;">134</div>
<div class="t" style="top:587px;height:18px;line-height:18px;font-size:13.8px;color:#212529;left:22.50px;width:144px;text-align:center;">PR2023101312</div>
<div class="t" style="top:619px;height:18px;line-height:18px;font-size:13.8px;color:#212529;letter-spacing:0.155px;left:22.58px;width:144px;text-align:center;">2023-10-13</div>
<div class="t" style="top:587px;height:18px;line-height:18px;font-size:13.8px;color:#212529;left:126.50px;width:147px;text-align:center;">PO2023101704</div>
<div class="t" style="top:619px;height:18px;line-height:18px;font-size:13.8px;color:#212529;letter-spacing:0.267px;left:126.63px;width:147px;text-align:center;">2023-10-17</div>
<div class="t" style="top:587px;height:18px;line-height:18px;font-size:13.8px;color:#212529;letter-spacing:-0.342px;left:338.33px;width:258px;text-align:center;">HOLDER TURNING</div>
<div class="t" style="top:619px;height:18px;line-height:18px;font-size:13.8px;color:#212529;letter-spacing:-0.23px;left:338.38px;width:258px;text-align:center;">TWLNL 3232 P08</div>
<div class="t" style="top:587px;height:18px;line-height:18px;font-size:13.8px;color:#212529;left:556.50px;width:105px;text-align:center;">1.00</div>
<div class="t" style="top:619px;height:18px;line-height:18px;font-size:13.8px;color:#212529;left:556.50px;width:105px;text-align:center;">0</div>
<div class="t" style="top:603px;height:18px;line-height:18px;font-size:13.8px;color:#212529;left:621.50px;width:76px;text-align:center;">EA</div>
<div class="t" style="top:587px;height:18px;line-height:18px;font-size:13.8px;color:#212529;left:657.50px;width:129px;text-align:center;">2,175,000.00</div>
<div class="t" style="top:619px;height:18px;line-height:18px;font-size:13.8px;color:#212529;left:657.50px;width:129px;text-align:center;">0</div>
<div class="t" style="top:587px;height:18px;line-height:18px;font-size:13.8px;color:#212529;left:746.50px;width:138px;text-align:center;">2,414,250.00</div>
<div class="t" style="top:619px;height:18px;line-height:18px;font-size:13.8px;color:#212529;left:746.50px;width:138px;text-align:center;">0</div>
<div class="t" style="top:592px;height:18px;line-height:18px;font-size:13.8px;color:#212529;letter-spacing:-0.799px;left:844.10px;width:185px;text-align:center;">ELANG PERKASA</div>
<div class="t" style="top:614px;height:18px;line-height:18px;font-size:13.8px;color:#212529;letter-spacing:-0.45px;left:844.27px;width:185px;text-align:center;">INDOJAYA</div>
<div class="r" style="left:10px;top:643px;width:1322px;height:31px;background:#f2f2f2;"></div>
<div class="r" style="left:10px;top:673px;width:32px;height:31px;background:#f2f2f2;"></div>
<div class="r" style="left:641px;top:673px;width:36px;height:31px;background:#f2f2f2;"></div>
<div class="r" style="left:864px;top:673px;width:145px;height:31px;background:#f2f2f2;"></div>
<div class="t" style="top:666px;height:18px;line-height:18px;font-size:13.8px;color:#212529;left:-9.50px;width:72px;text-align:center;">135</div>
<div class="t" style="top:650px;height:18px;line-height:18px;font-size:13.8px;color:#212529;left:22.50px;width:144px;text-align:center;">PR2023101312</div>
<div class="t" style="top:681px;height:18px;line-height:18px;font-size:13.8px;color:#212529;letter-spacing:0.155px;left:22.58px;width:144px;text-align:center;">2023-10-13</div>
<div class="t" style="top:650px;height:18px;line-height:18px;font-size:13.8px;color:#212529;left:126.50px;width:147px;text-align:center;">PO2023101704</div>
<div class="t" style="top:681px;height:18px;line-height:18px;font-size:13.8px;color:#212529;letter-spacing:0.267px;left:126.63px;width:147px;text-align:center;">2023-10-17</div>
<div class="t" style="top:650px;height:18px;line-height:18px;font-size:13.8px;color:#212529;letter-spacing:-0.407px;left:338.30px;width:258px;text-align:center;">INSERT TURNING</div>
<div class="t" style="top:681px;height:18px;line-height:18px;font-size:13.8px;color:#212529;letter-spacing:0.06px;left:338.53px;width:258px;text-align:center;">WNMG 080408 ML TT5080</div>
<div class="t" style="top:650px;height:18px;line-height:18px;font-size:13.8px;color:#212529;left:556.50px;width:105px;text-align:center;">10.00</div>
<div class="t" style="top:681px;height:18px;line-height:18px;font-size:13.8px;color:#212529;left:556.50px;width:105px;text-align:center;">0</div>
<div class="t" style="top:666px;height:18px;line-height:18px;font-size:13.8px;color:#212529;left:621.50px;width:76px;text-align:center;">EA</div>
<div class="t" style="top:650px;height:18px;line-height:18px;font-size:13.8px;color:#212529;left:657.50px;width:129px;text-align:center;">97,000.00</div>
<div class="t" style="top:681px;height:18px;line-height:18px;font-size:13.8px;color:#212529;left:657.50px;width:129px;text-align:center;">0</div>
<div class="t" style="top:650px;height:18px;line-height:18px;font-size:13.8px;color:#212529;left:746.50px;width:138px;text-align:center;">1,076,700.00</div>
<div class="t" style="top:681px;height:18px;line-height:18px;font-size:13.8px;color:#212529;left:746.50px;width:138px;text-align:center;">0</div>
<div class="t" style="top:655px;height:18px;line-height:18px;font-size:13.8px;color:#212529;letter-spacing:-0.799px;left:844.10px;width:185px;text-align:center;">ELANG PERKASA</div>
<div class="t" style="top:676px;height:18px;line-height:18px;font-size:13.8px;color:#212529;letter-spacing:-0.45px;left:844.27px;width:185px;text-align:center;">INDOJAYA</div>
<div class="r" style="left:42px;top:423px;width:105px;height:1px;background:#dee2e6;"></div>
<div class="r" style="left:146px;top:423px;width:108px;height:1px;background:#dee2e6;"></div>
<div class="r" style="left:253px;top:423px;width:106px;height:1px;background:#dee2e6;"></div>
<div class="r" style="left:358px;top:423px;width:219px;height:1px;background:#dee2e6;"></div>
<div class="r" style="left:576px;top:423px;width:66px;height:1px;background:#dee2e6;"></div>
<div class="r" style="left:677px;top:423px;width:90px;height:1px;background:#dee2e6;"></div>
<div class="r" style="left:766px;top:423px;width:99px;height:1px;background:#dee2e6;"></div>
<div class="r" style="left:1009px;top:423px;width:100px;height:1px;background:#dee2e6;"></div>
<div class="r" style="left:1108px;top:423px;width:113px;height:1px;background:#dee2e6;"></div>
<div class="r" style="left:1220px;top:423px;width:112px;height:1px;background:#dee2e6;"></div>
<div class="r" style="left:10px;top:454px;width:1322px;height:1px;background:#dee2e6;"></div>
<div class="r" style="left:42px;top:486px;width:105px;height:1px;background:#dee2e6;"></div>
<div class="r" style="left:146px;top:486px;width:108px;height:1px;background:#dee2e6;"></div>
<div class="r" style="left:253px;top:486px;width:106px;height:1px;background:#dee2e6;"></div>
<div class="r" style="left:358px;top:486px;width:219px;height:1px;background:#dee2e6;"></div>
<div class="r" style="left:576px;top:486px;width:66px;height:1px;background:#dee2e6;"></div>
<div class="r" style="left:677px;top:486px;width:90px;height:1px;background:#dee2e6;"></div>
<div class="r" style="left:766px;top:486px;width:99px;height:1px;background:#dee2e6;"></div>
<div class="r" style="left:1009px;top:486px;width:100px;height:1px;background:#dee2e6;"></div>
<div class="r" style="left:1108px;top:486px;width:113px;height:1px;background:#dee2e6;"></div>
<div class="r" style="left:1220px;top:486px;width:112px;height:1px;background:#dee2e6;"></div>
<div class="r" style="left:10px;top:517px;width:1322px;height:1px;background:#dee2e6;"></div>
<div class="r" style="left:42px;top:548px;width:105px;height:1px;background:#dee2e6;"></div>
<div class="r" style="left:146px;top:548px;width:108px;height:1px;background:#dee2e6;"></div>
<div class="r" style="left:253px;top:548px;width:106px;height:1px;background:#dee2e6;"></div>
<div class="r" style="left:358px;top:548px;width:219px;height:1px;background:#dee2e6;"></div>
<div class="r" style="left:576px;top:548px;width:66px;height:1px;background:#dee2e6;"></div>
<div class="r" style="left:677px;top:548px;width:90px;height:1px;background:#dee2e6;"></div>
<div class="r" style="left:766px;top:548px;width:99px;height:1px;background:#dee2e6;"></div>
<div class="r" style="left:1009px;top:548px;width:100px;height:1px;background:#dee2e6;"></div>
<div class="r" style="left:1108px;top:548px;width:113px;height:1px;background:#dee2e6;"></div>
<div class="r" style="left:1220px;top:548px;width:112px;height:1px;background:#dee2e6;"></div>
<div class="r" style="left:10px;top:579px;width:1322px;height:1px;background:#dee2e6;"></div>
<div class="r" style="left:42px;top:610px;width:105px;height:1px;background:#dee2e6;"></div>
<div class="r" style="left:146px;top:610px;width:108px;height:1px;background:#dee2e6;"></div>
<div class="r" style="left:253px;top:610px;width:106px;height:1px;background:#dee2e6;"></div>
<div class="r" style="left:358px;top:610px;width:219px;height:1px;background:#dee2e6;"></div>
<div class="r" style="left:576px;top:610px;width:66px;height:1px;background:#dee2e6;"></div>
<div class="r" style="left:677px;top:610px;width:90px;height:1px;background:#dee2e6;"></div>
<div class="r" style="left:766px;top:610px;width:99px;height:1px;background:#dee2e6;"></div>
<div class="r" style="left:1009px;top:610px;width:100px;height:1px;background:#dee2e6;"></div>
<div class="r" style="left:1108px;top:610px;width:113px;height:1px;background:#dee2e6;"></div>
<div class="r" style="left:1220px;top:610px;width:112px;height:1px;background:#dee2e6;"></div>
<div class="r" style="left:10px;top:642px;width:1322px;height:1px;background:#dee2e6;"></div>
<div class="r" style="left:42px;top:673px;width:105px;height:1px;background:#dee2e6;"></div>
<div class="r" style="left:146px;top:673px;width:108px;height:1px;background:#dee2e6;"></div>
<div class="r" style="left:253px;top:673px;width:106px;height:1px;background:#dee2e6;"></div>
<div class="r" style="left:358px;top:673px;width:219px;height:1px;background:#dee2e6;"></div>
<div class="r" style="left:576px;top:673px;width:66px;height:1px;background:#dee2e6;"></div>
<div class="r" style="left:677px;top:673px;width:90px;height:1px;background:#dee2e6;"></div>
<div class="r" style="left:766px;top:673px;width:99px;height:1px;background:#dee2e6;"></div>
<div class="r" style="left:1009px;top:673px;width:100px;height:1px;background:#dee2e6;"></div>
<div class="r" style="left:1108px;top:673px;width:113px;height:1px;background:#dee2e6;"></div>
<div class="r" style="left:1220px;top:673px;width:112px;height:1px;background:#dee2e6;"></div>
<div class="r" style="left:10px;top:704px;width:1322px;height:1px;background:#dee2e6;"></div>
<div class="r" style="left:10px;top:393px;width:1px;height:295px;background:#dee2e6;"></div>
<div class="r" style="left:42px;top:393px;width:1px;height:295px;background:#dee2e6;"></div>
<div class="r" style="left:146px;top:393px;width:1px;height:295px;background:#dee2e6;"></div>
<div class="r" style="left:253px;top:393px;width:1px;height:295px;background:#dee2e6;"></div>
<div class="r" style="left:358px;top:393px;width:1px;height:295px;background:#dee2e6;"></div>
<div class="r" style="left:576px;top:393px;width:1px;height:295px;background:#dee2e6;"></div>
<div class="r" style="left:641px;top:393px;width:1px;height:295px;background:#dee2e6;"></div>
<div class="r" style="left:677px;top:393px;width:1px;height:295px;background:#dee2e6;"></div>
<div class="r" style="left:766px;top:393px;width:1px;height:295px;background:#dee2e6;"></div>
<div class="r" style="left:864px;top:393px;width:1px;height:295px;background:#dee2e6;"></div>
<div class="r" style="left:1009px;top:393px;width:1px;height:295px;background:#dee2e6;"></div>
<div class="r" style="left:1108px;top:393px;width:1px;height:295px;background:#dee2e6;"></div>
<div class="r" style="left:1220px;top:393px;width:1px;height:295px;background:#dee2e6;"></div>
<div class="r" style="left:1331px;top:393px;width:1px;height:295px;background:#dee2e6;"></div>
<div class="r" style="left:926px;top:527px;width:176px;height:21px;background:rgba(150,200,245,0.86)"></div>
<div class="t" style="top:530px;height:16px;line-height:16px;font-size:12px;color:#1a1a1a;left:958.00px;">Ambil screenshot</div>
</body></html>
